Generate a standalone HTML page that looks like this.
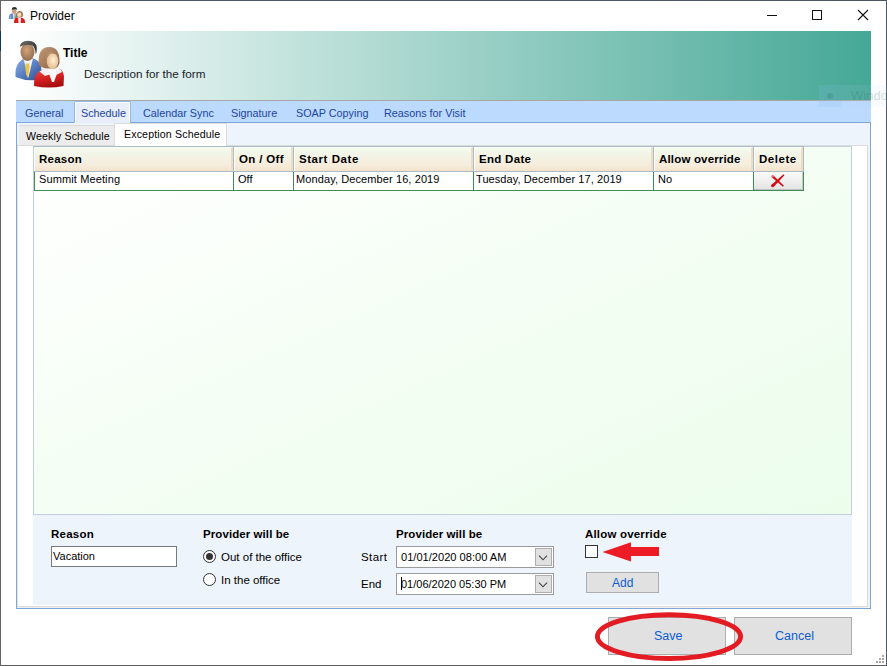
<!DOCTYPE html>
<html><head><meta charset="utf-8">
<style>
*{margin:0;padding:0;box-sizing:border-box}
html,body{width:887px;height:666px;overflow:hidden;background:#fff;font-family:"Liberation Sans",sans-serif;color:#000}
.a{position:absolute}
#win{position:absolute;left:0;top:0;width:887px;height:666px;border:1px solid #666;border-right-color:#4f5862;border-top-color:#646464;border-bottom-color:#5c5c5c;background:#fff}
.t{position:absolute;white-space:nowrap;line-height:1}
</style></head><body>
<div id="win"></div>
<div class="a" style="left:35px;top:0;width:852px;height:1px;background:linear-gradient(90deg,#5f6870,#475564 8%,#4a5866 60%,#4b5560)"></div>
<div class="a" style="left:0;top:31px;width:1px;height:20px;background:#053a66"></div>

<!-- title bar -->
<svg class="a" style="left:6px;top:5px" width="20" height="20" viewBox="6 5 20 20">
  <path d="M8.8,19 Q8.6,15 10.5,14 Q11.8,13.4 13,13.3 L16.5,13.3 Q17.5,13.6 17.5,15 L17,19Z" fill="#5a86d0"/>
  <path d="M9.5,18.5 Q9.4,15.5 11,14.5 L11.5,18.5Z" fill="#86aee6"/>
  <path d="M12.8,13.4 L15.6,13.4 L14.8,19 L13.4,19Z" fill="#f4f4f4"/>
  <path d="M13.9,14 L14.7,14 L14.8,18.5 L14.2,19 L13.8,18.5Z" fill="#e2b030"/>
  <ellipse cx="14.3" cy="11.3" rx="2.3" ry="2.4" fill="#c99d78"/>
  <path d="M11.8,10 Q11.8,7 14.4,7 Q17.1,7 17.1,10 L16.6,9.6 Q14.5,8.8 12.3,9.8Z" fill="#2a2a2a"/>
  <path d="M14,23 Q13.8,19 16,18 Q17.5,17.4 19,17.4 L21,17.4 Q23.5,17.6 24.5,19.5 Q25.2,21 25.1,23Z" fill="#dc1e1e"/>
  <path d="M18.2,17.5 L20.9,17.5 L20.7,23 L18.5,23Z" fill="#fafafa"/>
  <path d="M16.4,16.5 Q16,11 19.8,11 Q23.4,11 23.1,16 Q22.2,17.2 21,17.2 L18,17.2 Q16.8,17.2 16.4,16.5Z" fill="#a87a52"/>
  <ellipse cx="19.3" cy="14.8" rx="2.1" ry="2.3" fill="#f6dcb0"/>
</svg>
<div class="t" style="left:30px;top:10px;font-size:12px;color:#000">Provider</div>
<div class="a" style="left:767px;top:15px;width:10px;height:1px;background:#111"></div>
<div class="a" style="left:812px;top:10px;width:10px;height:10px;border:1px solid #111"></div>
<svg class="a" style="left:857px;top:9px" width="12" height="12" viewBox="0 0 12 12"><path d="M1,1 L11,11 M11,1 L1,11" stroke="#111" stroke-width="1.1"/></svg>

<!-- header gradient -->
<div class="a" style="left:16px;top:31px;width:855px;height:69px;background:linear-gradient(90deg,#ffffff 0%,#45a896 100%)"></div>
<div class="a" style="left:16px;top:100px;width:855px;height:1px;background:#a7a7a7"></div>

<!-- big icon -->
<svg class="a" style="left:12px;top:36px" width="56" height="56" viewBox="0 0 56 56">
  <defs>
    <radialGradient id="mface" cx="0.45" cy="0.4" r="0.65"><stop offset="0" stop-color="#d4a57c"/><stop offset="1" stop-color="#90684a"/></radialGradient>
    <radialGradient id="wface" cx="0.55" cy="0.45" r="0.6"><stop offset="0" stop-color="#fff0d4"/><stop offset="1" stop-color="#e2b688"/></radialGradient>
    <linearGradient id="msuit" x1="0" y1="0" x2="1" y2="1"><stop offset="0" stop-color="#8cb0e2"/><stop offset="0.5" stop-color="#5a80c4"/><stop offset="1" stop-color="#2c4a8a"/></linearGradient>
    <linearGradient id="wred" x1="0" y1="0" x2="0.3" y2="1"><stop offset="0" stop-color="#f05050"/><stop offset="0.6" stop-color="#d42020"/><stop offset="1" stop-color="#a81010"/></linearGradient>
    <linearGradient id="whair" x1="0" y1="0" x2="1" y2="1"><stop offset="0" stop-color="#c29a78"/><stop offset="1" stop-color="#8a6040"/></linearGradient>
    <linearGradient id="mhair" x1="0" y1="0" x2="1" y2="1"><stop offset="0" stop-color="#707070"/><stop offset="1" stop-color="#202020"/></linearGradient>
  </defs>
  <path d="M3.5,41 Q3,31 6.5,27 Q9.5,23 13,22 L20,22 Q26,23.5 29,29 L30,43 Q17,46.5 3.5,41Z" fill="url(#msuit)"/>
  <path d="M11.5,22.5 L21,22.5 L16.2,42 Z" fill="#f4f4f4"/>
  <path d="M13.8,27.5 L17.2,27.5 L17.6,31 L16,42 L14.2,39 L13.2,31Z" fill="#e8c448"/>
  <ellipse cx="15.5" cy="16" rx="7" ry="9" fill="url(#mface)"/>
  <path d="M8,11.5 Q7.8,5 16,4.8 Q24.6,5 24.8,12 Q24.8,16 23.8,18.5 Q23.2,10 19.5,9 Q13.5,7.8 8.4,10.5Z" fill="url(#mhair)"/>
  <path d="M22,50 Q21.5,39 27,35.5 Q30.5,33.5 34,32.5 L47,32.5 Q51,34 52,40 L51.5,50 Q37,53 22,50Z" fill="url(#wred)"/>
  <path d="M35,32 L47,32 L42,46 L40,46Z" fill="#f8f8f8"/>
  <path d="M27.5,35.5 Q31,33 35,32 L39,38 L33,40Z" fill="#f2f2f2"/>
  <path d="M47,32 Q49,33.5 50,36 L44,39 L43.5,34Z" fill="#f2f2f2"/>
  <path d="M26.8,28 Q25.5,11 37.5,11 Q48,11 47.5,27 Q46.5,31 43,32.5 L37,32.5 Q29,32.5 26.8,28Z" fill="url(#whair)"/>
  <ellipse cx="40.5" cy="25" rx="5.8" ry="8.2" fill="url(#wface)"/>
  <path d="M33.5,25 Q33,15.5 40,15 Q46,15 47,20.5 Q44,17 39.5,17.5 Q35.2,18.5 34,26Z" fill="url(#whair)"/>
</svg>
<div class="t" style="left:63px;top:47px;font-size:12px;font-weight:bold">Title</div>
<div class="t" style="left:84px;top:68px;font-size:11.7px;color:#1a1a2a">Description for the form</div>


<!-- tab strip -->
<div class="a" style="left:16px;top:101px;width:855px;height:21px;background:#bcdafd"></div>
<div class="t" style="left:25px;top:108px;font-size:10.8px;color:#1d44a2">General</div>
<div class="t" style="left:143px;top:108px;font-size:10.8px;color:#1d44a2">Calendar Sync</div>
<div class="t" style="left:231px;top:108px;font-size:10.8px;color:#1d44a2">Signature</div>
<div class="t" style="left:296px;top:108px;font-size:10.8px;color:#1d44a2">SOAP Copying</div>
<div class="t" style="left:384px;top:108px;font-size:10.8px;color:#1d44a2">Reasons for Visit</div>

<!-- tab page -->
<div class="a" style="left:16px;top:122px;width:855px;height:487px;border:1px solid #7ea6dc;border-top-color:#7ea6dc;background:#eef4fc"></div>
<div class="a" style="left:74px;top:101px;width:57px;height:22px;background:#e8effa;border:1px solid #92b6e8;border-bottom:none;border-radius:2px 2px 0 0;box-shadow:inset 1px 1px 0 #fff,inset -1px 0 0 #fff"></div>
<div class="t" style="left:81px;top:108px;font-size:10.8px;color:#1d44a2">Schedule</div>
<!-- sub tab page white area -->
<div class="a" style="left:17px;top:145px;width:851px;height:462px;background:#fff;border:1px solid #dcdcdc;border-left-color:#e4e2e0;box-shadow:1px 1px 0 #f3efea"></div>
<!-- sub tabs -->
<div class="a" style="left:19px;top:125px;width:96px;height:20px;background:#ececec;border-top:1px solid #dadada"></div>
<div class="t" style="left:26px;top:131px;font-size:10.6px;letter-spacing:0.14px">Weekly Schedule</div>
<div class="a" style="left:114px;top:123px;width:113px;height:23px;background:#fff;border:1px solid #dcdcdc;border-bottom:none"></div>
<div class="t" style="left:124px;top:129px;font-size:10.6px;letter-spacing:0.15px">Exception Schedule</div>

<!-- grid -->
<div class="a" style="left:33px;top:146px;width:819px;height:369px;border:1px solid #c3cfdc;background:linear-gradient(to bottom right,#ffffff 0%,#f4fef4 50%,#ecfdec 100%)"></div>
<!-- header cells -->
<div class="a" style="left:33px;top:146px;width:771px;height:1px;background:#a9bcc6"></div>
<div class="a" style="left:33px;top:171px;width:771px;height:1px;background:#a9bcc6"></div>
<div class="a" style="left:34px;top:147px;width:199px;height:24px;background:linear-gradient(180deg,#f6fbf0 0%,#f1f6e8 20%,#f6ecdc 75%,#f3e2ca 100%);border-top:1px solid #fbfdf8;border-left:1px solid #fff;border-right:2px solid #efdcc4"></div>
<div class="a" style="left:233px;top:146px;width:1px;height:26px;background:#a9bcc6"></div>
<div class="a" style="left:234px;top:147px;width:59px;height:24px;background:linear-gradient(180deg,#f6fbf0 0%,#f1f6e8 20%,#f6ecdc 75%,#f3e2ca 100%);border-top:1px solid #fbfdf8;border-left:1px solid #fff;border-right:2px solid #efdcc4"></div>
<div class="a" style="left:293px;top:146px;width:1px;height:26px;background:#a9bcc6"></div>
<div class="a" style="left:294px;top:147px;width:179px;height:24px;background:linear-gradient(180deg,#f6fbf0 0%,#f1f6e8 20%,#f6ecdc 75%,#f3e2ca 100%);border-top:1px solid #fbfdf8;border-left:1px solid #fff;border-right:2px solid #efdcc4"></div>
<div class="a" style="left:473px;top:146px;width:1px;height:26px;background:#a9bcc6"></div>
<div class="a" style="left:474px;top:147px;width:179px;height:24px;background:linear-gradient(180deg,#f6fbf0 0%,#f1f6e8 20%,#f6ecdc 75%,#f3e2ca 100%);border-top:1px solid #fbfdf8;border-left:1px solid #fff;border-right:2px solid #efdcc4"></div>
<div class="a" style="left:653px;top:146px;width:1px;height:26px;background:#a9bcc6"></div>
<div class="a" style="left:654px;top:147px;width:99px;height:24px;background:linear-gradient(180deg,#f6fbf0 0%,#f1f6e8 20%,#f6ecdc 75%,#f3e2ca 100%);border-top:1px solid #fbfdf8;border-left:1px solid #fff;border-right:2px solid #efdcc4"></div>
<div class="a" style="left:753px;top:146px;width:1px;height:26px;background:#a9bcc6"></div>
<div class="a" style="left:754px;top:147px;width:49px;height:24px;background:linear-gradient(180deg,#f6fbf0 0%,#f1f6e8 20%,#f6ecdc 75%,#f3e2ca 100%);border-top:1px solid #fbfdf8;border-left:1px solid #fff;border-right:2px solid #efdcc4"></div>
<div class="a" style="left:803px;top:146px;width:1px;height:26px;background:#a9bcc6"></div>
<div class="t" style="left:39px;top:154px;font-size:11.5px;font-weight:bold;letter-spacing:0.25px">Reason</div>
<div class="t" style="left:239px;top:154px;font-size:11.5px;font-weight:bold;letter-spacing:0.35px">On / Off</div>
<div class="t" style="left:299px;top:154px;font-size:11.5px;font-weight:bold;letter-spacing:0.55px">Start Date</div>
<div class="t" style="left:479px;top:154px;font-size:11.5px;font-weight:bold;letter-spacing:0.3px">End Date</div>
<div class="t" style="left:659px;top:154px;font-size:11.5px;font-weight:bold;letter-spacing:0.17px">Allow override</div>
<div class="t" style="left:759px;top:154px;font-size:11.5px;font-weight:bold;letter-spacing:0.55px">Delete</div>
<!-- data row -->
<div class="a" style="left:34px;top:172px;width:770px;height:18px;background:#fff"></div>
<div class="a" style="left:754px;top:172px;width:49px;height:18px;background:linear-gradient(180deg,#fbfbfb,#e4e4e4);border-right:1px solid #c8c8c8;border-bottom:1px solid #c0c0c0"></div>
<div class="a" style="left:34px;top:172px;width:1px;height:19px;background:#3f8f55"></div>
<div class="a" style="left:233px;top:172px;width:1px;height:19px;background:#3f8f55"></div>
<div class="a" style="left:293px;top:172px;width:1px;height:19px;background:#3f8f55"></div>
<div class="a" style="left:473px;top:172px;width:1px;height:19px;background:#3f8f55"></div>
<div class="a" style="left:653px;top:172px;width:1px;height:19px;background:#3f8f55"></div>
<div class="a" style="left:753px;top:172px;width:1px;height:19px;background:#3f8f55"></div>
<div class="a" style="left:803px;top:172px;width:1px;height:19px;background:#3f8f55"></div>
<div class="a" style="left:34px;top:190px;width:770px;height:1px;background:#3f8f55"></div>
<svg class="a" style="left:766px;top:172px" width="22" height="18" viewBox="0 0 22 18"><path d="M5.76,5.22 L16.89,14.75 L17.91,13.65 L7.44,3.38Z" fill="#d40c14"/><path d="M17.55,2.33 L5.56,12.72 L7.64,14.88 L18.45,3.27Z" fill="#dc0a12"/><circle cx="6.60" cy="13.80" r="1.5" fill="#d00a12"/><circle cx="6.60" cy="4.30" r="1.2" fill="#ea6a70"/></svg>
<div class="t" style="left:39px;top:174px;font-size:11px;letter-spacing:0.12px">Summit Meeting</div>
<div class="t" style="left:238px;top:174px;font-size:11px">Off</div>
<div class="t" style="left:296px;top:174px;font-size:11px;letter-spacing:0.1px">Monday, December 16, 2019</div>
<div class="t" style="left:476px;top:174px;font-size:11px;letter-spacing:0.08px">Tuesday, December 17, 2019</div>
<div class="t" style="left:658px;top:174px;font-size:11px">No</div>

<!-- bottom panel -->
<div class="a" style="left:33px;top:515px;width:819px;height:90px;background:#eef4fc"></div>
<div class="t" style="left:51px;top:529px;font-size:11.5px;font-weight:bold;letter-spacing:0.25px">Reason</div>
<div class="a" style="left:51px;top:546px;width:126px;height:21px;background:#fff;border:1px solid #7a7a7a"></div>
<div class="t" style="left:53px;top:551px;font-size:11px">Vacation</div>
<div class="t" style="left:203px;top:529px;font-size:11.5px;font-weight:bold;letter-spacing:0.08px">Provider will be</div>
<div class="a" style="left:203px;top:550px;width:13px;height:13px;border-radius:50%;border:1px solid #333;background:#fff"></div>
<div class="a" style="left:206px;top:553px;width:7px;height:7px;border-radius:50%;background:#333"></div>
<div class="t" style="left:221px;top:552px;font-size:11.5px">Out of the office</div>
<div class="a" style="left:203px;top:573px;width:13px;height:13px;border-radius:50%;border:1px solid #333;background:#fff"></div>
<div class="t" style="left:221px;top:575px;font-size:11.5px">In the office</div>

<div class="t" style="left:396px;top:529px;font-size:11.5px;font-weight:bold;letter-spacing:0.08px">Provider will be</div>
<div class="t" style="left:361px;top:552px;font-size:11.5px;letter-spacing:0.4px">Start</div>
<div class="a" style="left:396px;top:546px;width:158px;height:22px;background:#fff;border:1px solid #9a9a9a"></div>
<div class="a" style="left:535px;top:548px;width:17px;height:18px;background:#e1e1e1;border:1px solid #adadad"></div>
<svg class="a" style="left:538px;top:554px" width="11" height="8" viewBox="0 0 11 8"><path d="M1,1.6 L5,5.8 L9,1.6" stroke="#404040" stroke-width="1.1" fill="none"/></svg>
<div class="t" style="left:401px;top:552px;font-size:11.1px">01/01/2020 08:00 AM</div>
<div class="t" style="left:361px;top:579px;font-size:11.5px">End</div>
<div class="a" style="left:396px;top:573px;width:158px;height:22px;background:#fff;border:1px solid #9a9a9a"></div>
<div class="a" style="left:535px;top:575px;width:17px;height:18px;background:#e1e1e1;border:1px solid #adadad"></div>
<svg class="a" style="left:538px;top:581px" width="11" height="8" viewBox="0 0 11 8"><path d="M1,1.6 L5,5.8 L9,1.6" stroke="#404040" stroke-width="1.1" fill="none"/></svg>
<div class="t" style="left:401px;top:579px;font-size:11px">01/06/2020 05:30 PM</div>
<div class="a" style="left:401px;top:577px;width:1px;height:13px;background:#000"></div>

<div class="t" style="left:585px;top:529px;font-size:11.5px;font-weight:bold;letter-spacing:0.18px">Allow override</div>
<div class="a" style="left:585px;top:545px;width:13px;height:13px;border:1px solid #333;background:#fff"></div>
<svg class="a" style="left:600px;top:540px" width="62" height="24" viewBox="0 0 62 24"><path d="M2.5,12 L31,2.3 L31,7 L59,7 L59,16 L31,16 L31,21.5Z" fill="#ed1c24"/></svg>
<div class="a" style="left:586px;top:572px;width:73px;height:21px;background:#e1e1e1;border:1px solid #adadad"></div>
<div class="t" style="left:612px;top:577px;font-size:12px;color:#0d5dd4">Add</div>

<!-- footer buttons -->
<div class="a" style="left:608px;top:617px;width:118px;height:38px;background:#e1e1e1;border:1px solid #adadad"></div>
<div class="t" style="left:654px;top:630px;font-size:12.5px;color:#0d5dd4">Save</div>
<div class="a" style="left:734px;top:617px;width:118px;height:38px;background:#e1e1e1;border:1px solid #adadad"></div>
<div class="t" style="left:775px;top:630px;font-size:12.5px;color:#0d5dd4">Cancel</div>
<svg class="a" style="left:590px;top:608px" width="160" height="58" viewBox="0 0 160 58"><ellipse cx="79" cy="28.6" rx="71.6" ry="21.9" fill="none" stroke="#e31b23" stroke-width="4.9"/></svg>

<!-- grip -->
<svg class="a" style="left:876px;top:654px" width="11" height="11" viewBox="0 0 11 11" fill="#a8a8a8"><rect x="6" y="1" width="2" height="2"/><rect x="3" y="4" width="2" height="2"/><rect x="6" y="4" width="2" height="2"/><rect x="0" y="7" width="2" height="2"/><rect x="3" y="7" width="2" height="2"/><rect x="6" y="7" width="2" height="2"/></svg>
<!-- faint toast overlay -->
<div class="a" style="left:819px;top:85px;width:68px;height:22px;background:rgba(190,215,245,0.10)"></div>
<div class="a" style="left:819px;top:85px;width:22px;height:22px;background:rgba(90,150,230,0.07)"></div>
<div class="a" style="left:827px;top:93px;width:6px;height:6px;border-radius:50%;background:rgba(40,110,90,0.22)"></div>
<div class="t" style="left:851px;top:89px;font-size:13px;color:rgba(40,80,70,0.2)">Windows</div>
</body></html>
